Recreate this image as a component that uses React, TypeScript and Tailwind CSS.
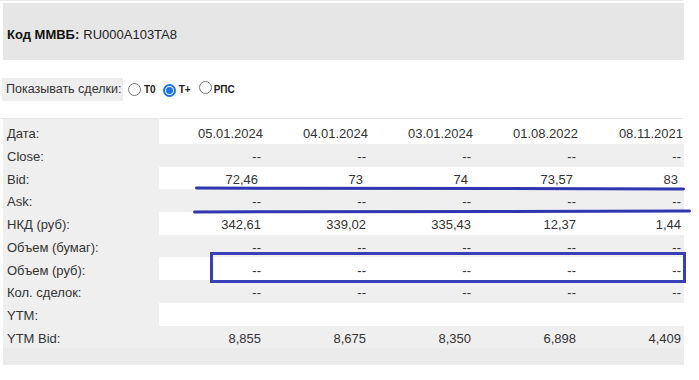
import React from "react";

const dates = ["05.01.2024", "04.01.2024", "03.01.2024", "01.08.2022", "08.11.2021"];
const rows: { label: string; values: string[]; gray: boolean; pr?: string }[] = [
  { label: "Close:", values: ["--", "--", "--", "--", "--"], gray: true },
  { label: "Bid:", values: ["72,46", "73", "74", "73,57", "83"], gray: false, pr: "pr-[6px]" },
  { label: "Ask:", values: ["--", "--", "--", "--", "--"], gray: true },
  { label: "НКД (руб):", values: ["342,61", "339,02", "335,43", "12,37", "1,44"], gray: false },
  { label: "Объем (бумаг):", values: ["--", "--", "--", "--", "--"], gray: true },
  { label: "Объем (руб):", values: ["--", "--", "--", "--", "--"], gray: false },
  { label: "Кол. сделок:", values: ["--", "--", "--", "--", "--"], gray: true },
  { label: "YTM:", values: ["", "", "", "", ""], gray: false },
  { label: "YTM Bid:", values: ["8,855", "8,675", "8,350", "6,898", "4,409"], gray: true },
];

function Radio({ checked }: { checked?: boolean }) {
  return checked ? (
    <span className="inline-flex w-[13px] h-[13px] rounded-full border-[2px] border-[#1a73e8] items-center justify-center bg-white">
      <span className="w-[7px] h-[7px] rounded-full bg-[#1a73e8]" />
    </span>
  ) : (
    <span className="inline-block w-[13px] h-[13px] rounded-full border border-[#767676] bg-white" />
  );
}

export default function App() {
  return (
    <div
      className="relative w-[699px] h-[380px] bg-white overflow-hidden text-[13px] text-[#333]"
      style={{ fontFamily: '"Liberation Sans", Arial, sans-serif' }}
    >
      <div className="h-[1px] w-[683px] bg-[#ececec]" />
      <div className="mt-[2px] ml-[3px] w-[681px] h-[57px] bg-[#e6e6e6] flex items-center pl-[4px] pt-[6px] text-[#111]">
        <span className="font-bold">Код ММВБ:</span>
        <span className="ml-[4px] text-[#222]">RU000A103TA8</span>
      </div>

      <div className="mt-[18px] flex items-center h-[23px]">
        <div className="ml-[2px] h-[23px] w-[121px] bg-[#eeeeee] flex items-center pl-[4px] whitespace-nowrap text-[12.5px] text-[#333]">
          Показывать сделки:
        </div>
        <div className="flex items-center ml-[5px]">
          <Radio />
          <span className="ml-[3px] text-[10px] font-bold text-[#222]">T0</span>
          <span className="ml-[7px]"><Radio checked /></span>
          <span className="ml-[3px] text-[10px] font-bold text-[#222]">T+</span>
          <span className="ml-[8px]"><Radio /></span>
          <span className="ml-[2px] text-[10px] font-bold text-[#222]">РПС</span>
        </div>
      </div>

      <div className="mt-[17px] h-[1px] w-[683px] bg-[#e8e8e8]" />

      <div className="ml-[3px] w-[681px]">
        <div className="grid grid-cols-[156px_repeat(5,105px)] h-[25px] items-center">
          <div className="h-full bg-[#efefef] flex items-center pl-[4px] pt-[5px]">Дата:</div>
          {dates.map((d) => (
            <div key={d} className="h-full flex items-center justify-end pr-[1px] pt-[5px]">
              {d}
            </div>
          ))}
        </div>
        {rows.map((r) => (
          <div
            key={r.label}
            className={`grid grid-cols-[156px_repeat(5,105px)] h-[22.7px] ${r.gray ? "bg-[#efefef]" : ""}`}
          >
            <div className="bg-[#efefef] flex items-center pl-[4px] pt-[3px]">{r.label}</div>
            {r.values.map((v, i) => (
              <div
                key={i}
                className={`flex items-center justify-end pt-[3px] ${r.pr ? r.pr : "pr-[3px]"}`}
              >
                {v}
              </div>
            ))}
          </div>
        ))}
        <div className="h-[17px] bg-[#ebebeb]" />
      </div>

      {/* annotations */}
      <div className="absolute left-[195px] top-[187px] w-[490px] h-[3px] bg-[#2f37b0] rounded-full rotate-[0.1deg]" />
      <div className="absolute left-[193px] top-[210px] w-[498px] h-[3px] bg-[#2f37b0] rounded-full -rotate-[0.1deg]" />
      <div className="absolute left-[210px] top-[252px] w-[476px] h-[31px] border-[3px] border-[#3a3fb8]" />
    </div>
  );
}
